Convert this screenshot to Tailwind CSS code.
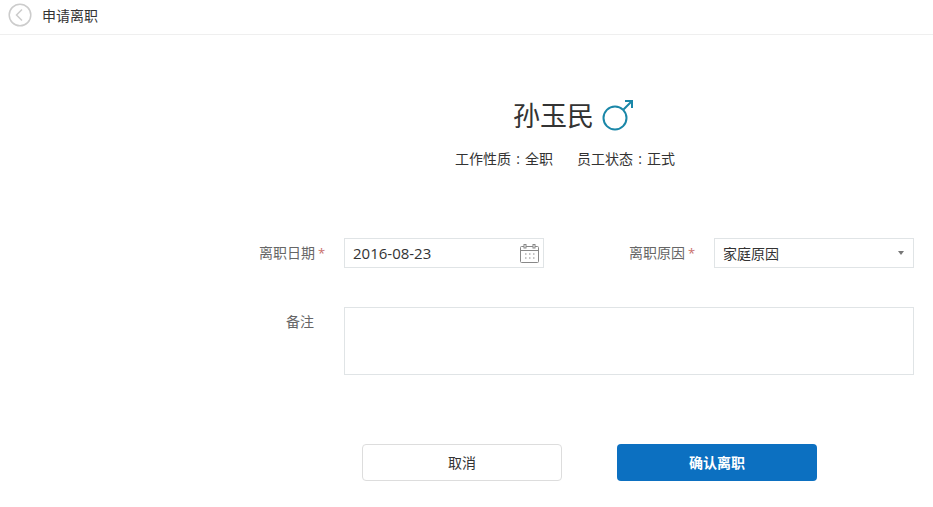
<!DOCTYPE html>
<html lang="zh">
<head>
    <meta charset="UTF-8">
    <meta name="viewport" content="width=device-width, initial-scale=1.0">
    <title>申请离职</title>
    <script src="https://cdn.jsdelivr.net/npm/@tailwindcss/browser@4"></script>
</head>
<body class="bg-white h-[507px] w-[933px] overflow-hidden font-['Open_Sans','Noto_Sans_CJK_SC',sans-serif] text-[#333]">
    <!-- Top bar -->
    <header class="h-[35px] border-b border-[#efefef] flex items-center pl-[8px] gap-[10px]">
        <svg width="24" height="24" viewBox="0 0 24 24" fill="none" class="mb-[4px]">
            <circle cx="12" cy="12" r="10.8" stroke="#ccc" stroke-width="1.5"/>
            <path d="M14 6.5 L8.5 12 L14 17.5" stroke="#ccc" stroke-width="1.5"/>
        </svg>
        <span class="text-[14px] mb-[4px]">申请离职</span>
    </header>

    <!-- Employee -->
    <section class="ml-[285px] w-[560px] flex flex-col items-center pt-[64px]">
        <div class="flex items-center gap-[7px] h-[34px] pl-[18px]">
            <span class="text-[27px] leading-[34px] text-[#333]">孙玉民</span>
            <svg width="34" height="34" viewBox="0 0 34 34" fill="none" class="mb-[2px]">
                <circle cx="14" cy="20" r="11.5" stroke="#1a87a8" stroke-width="2"/>
                <path d="M22.5 11.5 L31 3 M24 3 H31 V10" stroke="#1a87a8" stroke-width="2"/>
            </svg>
        </div>
        <div class="flex gap-[24px] text-[14px] leading-[18px] mt-[17px]">
            <span>工作性质<span class="inline-block w-[14px] text-center">:</span>全职</span>
            <span>员工状态<span class="inline-block w-[14px] text-center">:</span>正式</span>
        </div>
    </section>

    <!-- Form -->
    <form class="mt-[70px] pl-[259px]">
        <div class="flex items-center h-[30px]">
            <label class="w-[85px] text-[14px] text-[#666]">离职日期<span class="ml-[3px] text-[13px] text-[#c9706c]">*</span></label>
            <div class="w-[200px] h-[30px] border border-[#e0e4e6] flex items-center justify-between pl-[8px] pr-[4px]">
                <span class="text-[15px] text-[#333]">2016-08-23</span>
                <svg width="19" height="19" viewBox="0 0 19 19" fill="none" stroke="#888" stroke-width="1">
                    <rect x="0.5" y="2.5" width="18" height="16" rx="1"/>
                    <path d="M0.5 6.5 H18.5"/>
                    <rect x="4" y="0.5" width="2" height="3.5" fill="#fff"/>
                    <rect x="13" y="0.5" width="2" height="3.5" fill="#fff"/>
                    <path d="M5 10h1.5M9 10h1.5M13 10h1.5M5 14h1.5M9 14h1.5M13 14h1.5"/>
                </svg>
            </div>
            <label class="w-[85px] ml-[85px] text-[14px] text-[#666]">离职原因<span class="ml-[3px] text-[13px] text-[#c9706c]">*</span></label>
            <div class="w-[200px] h-[30px] border border-[#e0e4e6] flex items-center justify-between pl-[8px] pr-[9px]">
                <span class="text-[14px] text-[#333]">家庭原因</span>
                <span class="w-0 h-0 border-x-[3px] border-x-transparent border-t-[4px] border-t-[#777]"></span>
            </div>
        </div>
        <div class="flex mt-[39px]">
            <label class="w-[85px] text-[14px] leading-[18px] mt-[6px] pl-[27px] text-[#666]">备注</label>
            <div class="w-[570px] h-[68px] border border-[#e0e4e6]"></div>
        </div>
    </form>

    <!-- Actions -->
    <div class="flex gap-[55px] ml-[362px] mt-[69px]">
        <button class="w-[200px] h-[37px] border border-[#ddd] rounded-[4px] bg-white text-[14px] text-[#333]">取消</button>
        <button class="w-[200px] h-[37px] rounded-[4px] bg-[#0c70c1] text-[14px] font-bold text-white">确认离职</button>
    </div>
</body>
</html>
